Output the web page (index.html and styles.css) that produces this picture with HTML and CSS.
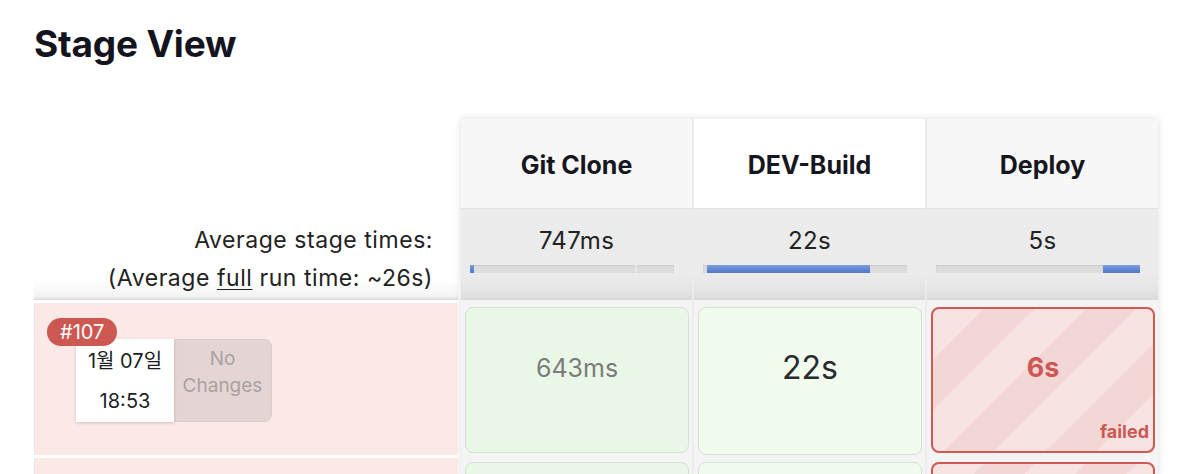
FILE: index.html
```html
<!DOCTYPE html>
<html lang="ko">
<head>
<meta charset="utf-8">
<title>Stage View</title>
<link rel="stylesheet" href="styles.css">
</head>
<body>
<h1 class="title">Stage View</h1>
<div class="stage-view">
  <div class="labels">
    <div class="label-head"></div>
    <div class="label-avg">
      <div>Average stage times:</div>
      <div>(Average <u>full</u> run time: ~26s)</div>
    </div>
    <div class="build-row">
      <span class="badge">#107</span>
      <div class="build-card">
        <div class="build-date"><div>1월 07일</div><div>18:53</div></div>
        <div class="build-changes">No<br>Changes</div>
      </div>
    </div>
    <div class="build-row partial"></div>
  </div>
  <div class="stages">
    <div class="stage-col">
      <div class="stage-head">Git Clone</div>
      <div class="stage-avg">
        <div class="avg-time">747ms</div>
        <div class="bar"><span class="fill" style="left:0;width:2%"></span><span class="tick" style="left:81%"></span></div>
      </div>
      <div class="stage-row"><div class="cell ok faint">643ms</div></div>
      <div class="stage-row partial"><div class="cell ok"></div></div>
    </div>
    <div class="stage-col">
      <div class="stage-head hover">DEV-Build</div>
      <div class="stage-avg">
        <div class="avg-time">22s</div>
        <div class="bar"><span class="fill" style="left:2%;width:80%"></span></div>
      </div>
      <div class="stage-row"><div class="cell ok light big">22s</div></div>
      <div class="stage-row partial"><div class="cell ok light"></div></div>
    </div>
    <div class="stage-col">
      <div class="stage-head">Deploy</div>
      <div class="stage-avg">
        <div class="avg-time">5s</div>
        <div class="bar"><span class="fill" style="left:82%;width:18%"></span></div>
      </div>
      <div class="stage-row"><div class="cell failed">6s<span class="status">failed</span></div></div>
      <div class="stage-row partial"><div class="cell failed"></div></div>
    </div>
  </div>
</div>
</body>
</html>
```
FILE: styles.css
```css
html, body {
  margin: 0;
  padding: 0;
  overflow: hidden;
}
body {
  font-family: Inter, "Noto Sans CJK KR", sans-serif;
  color: #14141f;
  background: #fff;
}
.title {
  margin: 0;
  padding: 22px 0 0 34px;
  font-size: 37px;
  line-height: 44px;
  font-weight: 700;
  letter-spacing: -0.2px;
  color: #14141f;
}
.stage-view {
  display: flex;
  align-items: flex-start;
  padding-left: 34px;
  margin-top: 52px;
}
.labels {
  width: 424px;
  display: flex;
  flex-direction: column;
  gap: 3px;
}
.label-head {
  height: 90px;
}
.label-avg {
  height: 92px;
  box-sizing: border-box;
  margin-top: -3px;
  padding: 13px 25px 0 0;
  text-align: right;
  font-size: 23px;
  letter-spacing: 0.55px;
  line-height: 38px;
  color: #222;
  background: linear-gradient(to bottom, #fff 0, #fff 78%, #f3f3f3 96%, #d9d9d9 100%);
}
.label-avg u {
  text-decoration-thickness: 1px;
  text-underline-offset: 3px;
}
.build-row {
  position: relative;
  height: 152px;
  box-sizing: border-box;
  padding: 36px 0 0 41px;
  background: #fbe9e7;
  border-left: 1px solid #efe3e2;
}
.build-row.partial {
  height: 20px;
  padding: 0;
}
.badge {
  position: absolute;
  left: 12px;
  top: 15px;
  height: 28px;
  padding: 0 13px;
  border-radius: 14px;
  background: #cc5851;
  color: #fff;
  font-size: 20px;
  line-height: 28px;
  z-index: 2;
}
.build-card {
  display: flex;
  height: 83px;
  font-size: 19px;
}
.build-date {
  width: 98px;
  padding-top: 2px;
  box-sizing: border-box;
  background: #fff;
  text-align: center;
  font-size: 20px;
  line-height: 40px;
  color: #1d1d24;
  box-shadow: 0 1px 3px rgba(0, 0, 0, 0.18);
  position: relative;
  z-index: 1;
}
.build-changes {
  width: 98px;
  box-sizing: border-box;
  padding-top: 5px;
  text-align: center;
  line-height: 27px;
  color: #a8a2a2;
  background: #e4d5d4;
  border: 1px solid #dccbca;
  border-left: none;
  border-radius: 0 8px 8px 0;
}
.stages {
  display: grid;
  grid-template-columns: repeat(3, 231px);
  column-gap: 2px;
  margin-left: 3px;
  margin-top: 1px;
  background: #ececec;
  box-shadow: 0 0 7px rgba(0, 0, 0, 0.14);
}
.stage-col {
  display: flex;
  flex-direction: column;
  background: #f4f4f4;
}
.stage-head {
  height: 90px;
  display: flex;
  align-items: center;
  justify-content: center;
  padding-top: 2px;
  background: #f7f7f7;
  border-bottom: 1px solid #e2e2e2;
  font-size: 25px;
  font-weight: 700;
  color: #16161e;
  box-sizing: border-box;
}
.stage-head.hover {
  background: #fff;
}
.stage-avg {
  height: 91px;
  box-sizing: border-box;
  padding-top: 18px;
  background: linear-gradient(to bottom, #ececec 0, #ebebeb 72%, #e3e3e3 92%, #dadada 100%);
}
.avg-time {
  text-align: center;
  font-size: 24px;
  letter-spacing: 0.3px;
  line-height: 28px;
  color: #222;
}
.bar {
  position: relative;
  height: 8px;
  margin: 10px 18px 0 9px;
  background: #dcdcdc;
  box-shadow: inset 0 1px 2px rgba(0, 0, 0, 0.08);
}
.bar .fill {
  position: absolute;
  top: 0;
  bottom: 0;
  background: linear-gradient(to bottom, #7e9fe0 0, #5d84d2 60%, #5479c8 100%);
}
.bar .tick {
  position: absolute;
  top: 0;
  bottom: 0;
  width: 2px;
  background: #e6e6e6;
}
.stage-row {
  height: 152px;
  margin-top: 3px;
  box-sizing: border-box;
  padding: 4px 3px 0 4px;
  overflow: hidden;
}
.stage-row.partial {
  height: 20px;
}
.cell {
  position: relative;
  height: 146px;
  box-sizing: border-box;
  border: 1px solid #d6dfd3;
  border-radius: 8px;
  padding-top: 45px;
  text-align: center;
  font-size: 25px;
  line-height: 30px;
}
.cell.ok {
  background: #e9f8e6;
  color: #7b7b7b;
}
.cell.ok.light {
  background: #f1fcef;
  height: 148px;
}
.cell.big {
  font-size: 32px;
  color: #2a2a2e;
}
.cell.failed {
  border: 2px solid #d05a53;
  padding-top: 44px;
  font-size: 27px;
  font-weight: 700;
  color: #cc5851;
  background: repeating-linear-gradient(135deg, #f6e3e2 0, #f6e3e2 36px, #f3d7d6 36px, #f3d7d6 72px);
}
.status {
  position: absolute;
  right: 4px;
  bottom: 8px;
  font-size: 18px;
  line-height: 22px;
  font-weight: 700;
  color: #cc5851;
}
```
